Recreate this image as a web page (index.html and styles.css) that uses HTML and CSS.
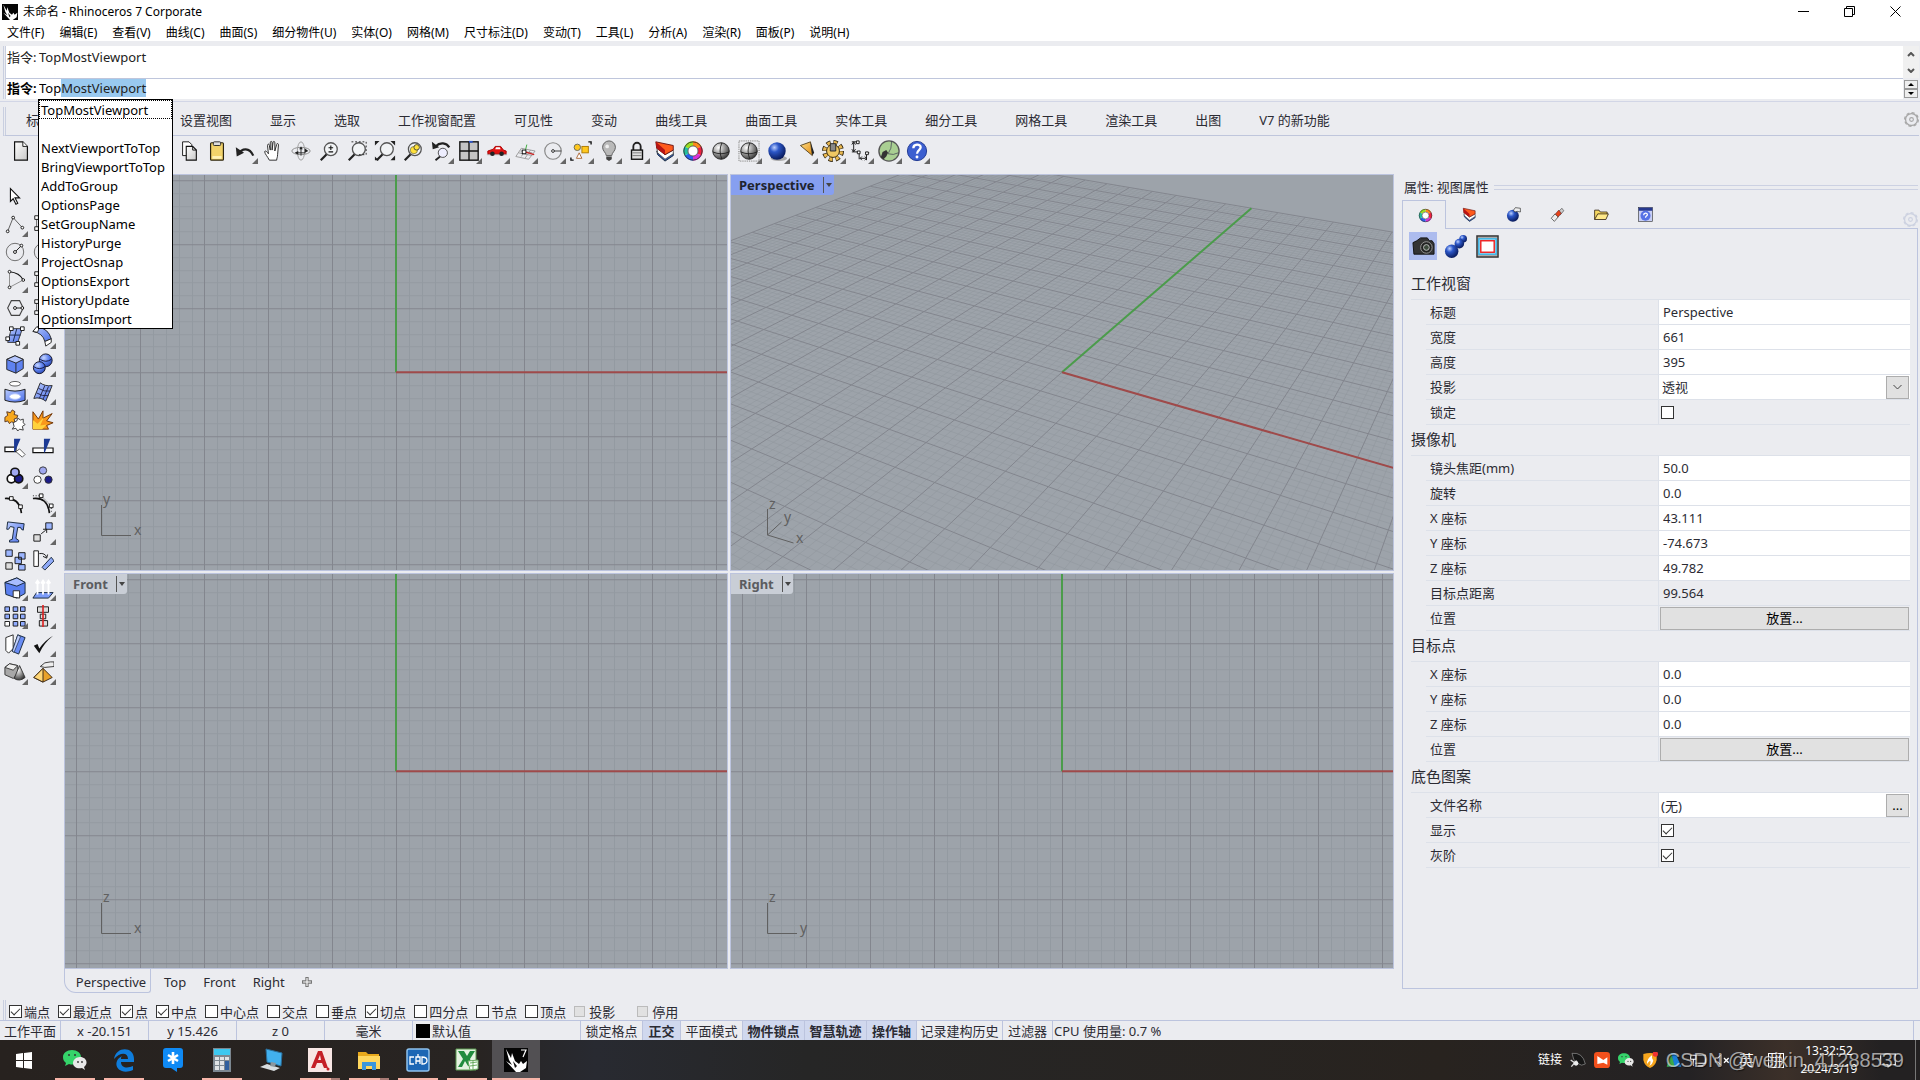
FILE: index.html
```html
<!DOCTYPE html>
<html lang="zh-CN">
<head>
<meta charset="utf-8">
<title>未命名 - Rhinoceros 7 Corporate</title>
<link rel="stylesheet" href="styles.css">
</head>
<body>
<svg class="defs" aria-hidden="true">
<defs>
<radialGradient id="gBlue" cx=".35" cy=".3" r=".75"><stop offset="0" stop-color="#bcd0ff"/><stop offset=".35" stop-color="#2c57c8"/><stop offset="1" stop-color="#061654"/></radialGradient>
<radialGradient id="gLight" cx=".35" cy=".3" r=".8"><stop offset="0" stop-color="#c4d4ff"/><stop offset=".5" stop-color="#5c80ee"/><stop offset="1" stop-color="#2440a8"/></radialGradient>
<radialGradient id="gGrey" cx=".35" cy=".3" r=".75"><stop offset="0" stop-color="#fff"/><stop offset=".5" stop-color="#9a9a9a"/><stop offset="1" stop-color="#333"/></radialGradient>
<linearGradient id="gFill" x1="0" y1="0" x2="1" y2="1"><stop offset="0" stop-color="#b9cbff"/><stop offset="1" stop-color="#4c70e8"/></linearGradient>
<linearGradient id="gGold" x1="0" y1="0" x2="1" y2="1"><stop offset="0" stop-color="#ffe08a"/><stop offset="1" stop-color="#e08a10"/></linearGradient>
<linearGradient id="gPage" x1="0" y1="0" x2="1" y2="1"><stop offset="0" stop-color="#fff"/><stop offset="1" stop-color="#c8c8c8"/></linearGradient>

<symbol id="new" viewBox="0 0 24 24"><path d="M5 2h9l5 5v15H5z" fill="url(#gPage)" stroke="#111" stroke-width="1.3"/><path d="M14 2v5h5" fill="#fff" stroke="#111"/></symbol>
<symbol id="copy" viewBox="0 0 24 24"><path d="M5 2h7l3 3v12H5z" fill="#fff" stroke="#111"/><path d="M9 7h7l4 4v11H9z" fill="url(#gPage)" stroke="#111" stroke-width="1.2"/><path d="M16 7v4h4" fill="none" stroke="#111"/></symbol>
<symbol id="paste" viewBox="0 0 24 24"><rect x="5" y="3" width="14" height="19" rx="1" fill="#f2d36b" stroke="#2b2410" stroke-width="1.3"/><rect x="8" y="2" width="8" height="4" rx="1" fill="#ddd" stroke="#222"/><path d="M7 19h10" stroke="#fff3b8" stroke-width="3"/></symbol>
<symbol id="undo" viewBox="0 0 24 24"><path d="M4 16C9 8 17 8 21 17" fill="none" stroke="#222" stroke-width="2.4"/><path d="M2 8l1 10 8-4z" fill="#222"/></symbol>
<symbol id="hand" viewBox="0 0 24 24"><path d="M8 22C6 18 3 15 3 13s2-1 4 2L6 6c0-2 2-2 2 0l1 5V3c0-2 2-2 2 0v8l1-8c0-2 2-2 2 0v9l2-7c0-2 2-1 2 0l-1 11c0 3-1 4-1 6z" fill="#fff" stroke="#222"/></symbol>
<symbol id="orbit" viewBox="0 0 24 24"><ellipse cx="12" cy="12" rx="10" ry="4" fill="none" stroke="#888"/><ellipse cx="12" cy="12" rx="4" ry="10" fill="none" stroke="#999"/><path d="M7 14h10M12 8v9" stroke="#222"/><path d="M12 7l-2 3h4zM5 14l4-2v4zM20 12l-4-3v5z" fill="#222"/></symbol>
<symbol id="zoom" viewBox="0 0 24 24"><path d="M10 15l-7 7" stroke="#222" stroke-width="2.4"/><circle cx="14" cy="10" r="7" fill="#f2f4f6" stroke="#555" stroke-width="1.4"/></symbol>
<symbol id="zoompm" viewBox="0 0 24 24"><use href="#zoom"/><path d="M14 6v5m-2.500-2.500h5M11.500 13h5" stroke="#111" stroke-width="1.2"/></symbol>
<symbol id="zoomwin" viewBox="0 0 24 24"><use href="#zoom"/><path d="M6 2h16v14H12" fill="none" stroke="#222" stroke-dasharray="2 2"/></symbol>
<symbol id="zoomext" viewBox="0 0 24 24"><use href="#zoom"/><path d="M1 1h5L1 6zM23 1h-5l5 5zM23 22v-5l-5 5zM1 22v-4l4 4z" fill="#222"/></symbol>
<symbol id="zoomsel" viewBox="0 0 24 24"><use href="#zoom"/><circle cx="13" cy="11" r="4" fill="#ffe13a" stroke="#443" stroke-width=".6"/><circle cx="16" cy="8" r="3" fill="#ffe13a" stroke="#443"/></symbol>
<symbol id="zoomundo" viewBox="0 0 24 24"><path d="M11 18l-5 4" stroke="#222" stroke-width="2"/><circle cx="14" cy="14" r="5" fill="#eef" stroke="#444"/><path d="M6 7c5-5 12-4 15 1" fill="none" stroke="#222" stroke-width="2.4"/><path d="M2 2l1 8 7-2z" fill="#222"/></symbol>
<symbol id="fourview" viewBox="0 0 24 24"><rect x="2" y="2" width="20" height="20" fill="#c4c4c4" stroke="#111" stroke-width="1.5"/><path d="M2 12h20M12 2v20" stroke="#111" stroke-width="1.5"/><path d="M12 2h4" stroke="#2d55c8" stroke-width="2"/></symbol>
<symbol id="car" viewBox="0 0 24 24"><path d="M1 16h22" stroke="#aaa"/><path d="M2 15v-3l6-2 2-3h6l3 4 3 1v3z" fill="#e21212" stroke="#a00"/><path d="M10 10l1-2h4l1 2z" fill="#fff"/><circle cx="7" cy="15" r="2.500" fill="#222"/><circle cx="17" cy="15" r="2.500" fill="#222"/></symbol>
<symbol id="cplane" viewBox="0 0 24 24"><path d="M2 18l6-9 15 3-7 9zM5 14l15 3M7 12l13 2M8 18l5-8M12 20l6-9" fill="none" stroke="#999"/><path d="M12 13l10 3" stroke="#c22" stroke-width="1.5"/><path d="M12 13l2-8" stroke="#3a3"/><rect x="9" y="11" width="4" height="4" fill="#fff" stroke="#111"/></symbol>
<symbol id="radius" viewBox="0 0 24 24"><circle cx="12" cy="12" r="9" fill="none" stroke="#888" stroke-width="1.3"/><path d="M12 12h9" stroke="#333"/><circle cx="12" cy="12" r="1.500" fill="#fff" stroke="#222"/></symbol>
<symbol id="objs" viewBox="0 0 24 24"><circle cx="8" cy="8" r="3.500" fill="#ffc81e" stroke="#665"/><rect x="13" y="7" width="7" height="7" fill="#ffc81e" stroke="#a70"/><path d="M10 14l3 6H7z" fill="#fff" stroke="#a63"/><path d="M20 2h3v3M1 19v3h3" fill="none" stroke="#111" stroke-width="1.500"/></symbol>
<symbol id="bulb" viewBox="0 0 24 24"><path d="M9 17c0-3-4-5-4-9a7 7 0 0 1 14 0c0 4-4 6-4 9z" fill="#b9b9b9" stroke="#555"/><path d="M9 18h6v3l-3 2-3-2z" fill="#444"/><circle cx="10" cy="7" r="2" fill="#eee"/></symbol>
<symbol id="lock" viewBox="0 0 24 24"><path d="M8 11V7a4 4 0 0 1 8 0v4" fill="none" stroke="#222" stroke-width="2"/><rect x="6" y="11" width="12" height="10" fill="#ddd" stroke="#111" stroke-width="1.500"/><path d="M7 14h10M7 17h10" stroke="#777"/></symbol>
<symbol id="layers" viewBox="0 0 24 24"><path d="M3 12l9 8 9-6v3l-9 6-8-7z" fill="#2c57b8" stroke="#123"/><path d="M3 8l9 8 9-5v4l-9 6-8-7z" fill="#fff" stroke="#555"/><path d="M2 2l19 4v5l-9 5-9-7z" fill="#ff5a1c" stroke="#611"/><path d="M2 2l10 9v5l-9-7z" fill="#b81414"/></symbol>
<symbol id="wheel" viewBox="0 0 24 24"><g fill="none" stroke-width="5"><path d="M12 4a8 8 0 0 1 7 4" stroke="#ff8a1a"/><path d="M19 8a8 8 0 0 1 0 8" stroke="#f32040"/><path d="M19 16a8 8 0 0 1-7 4" stroke="#d832d8"/><path d="M12 20a8 8 0 0 1-7-4" stroke="#2860f0"/><path d="M5 16a8 8 0 0 1 0-8" stroke="#22c0a0"/><path d="M5 8a8 8 0 0 1 7-4" stroke="#9be020"/></g><circle cx="12" cy="12" r="10" fill="none" stroke="#333"/><circle cx="12" cy="12" r="5.500" fill="#fff" stroke="#555"/></symbol>
<symbol id="gsphere" viewBox="0 0 24 24"><circle cx="12" cy="12" r="9" fill="url(#gGrey)" stroke="#222"/><path d="M3 13q9 4 18 0M13 3q-4 9 0 18" fill="none" stroke="#222"/></symbol>
<symbol id="dsphere" viewBox="0 0 24 24"><rect x="1" y="1" width="22" height="22" fill="none" stroke="#aaa" stroke-width="2" stroke-dasharray="1 1"/><use href="#gsphere"/></symbol>
<symbol id="bsphere" viewBox="0 0 24 24"><ellipse cx="14" cy="20" rx="9" ry="3" fill="#aaa"/><circle cx="12" cy="12" r="9.500" fill="url(#gBlue)"/></symbol>
<symbol id="cone" viewBox="0 0 24 24"><path d="M7 6l11-4 2 15z" fill="url(#gGold)" stroke="#542"/><path d="M18 2l2 15 2-3z" fill="#222"/></symbol>
<symbol id="gear" viewBox="0 0 24 24"><circle cx="12" cy="12" r="9" fill="none" stroke="#2d2410" stroke-width="6" stroke-dasharray="4.200 2.900"/><circle cx="12" cy="12" r="9" fill="none" stroke="#e9b850" stroke-width="4" stroke-dasharray="3.200 3.900" stroke-dashoffset="-.5"/><circle cx="12" cy="12" r="7" fill="#f0c864" stroke="#2d2410"/><path d="M9 4h6v8H9z" fill="#888" stroke="#222"/></symbol>
<symbol id="dims" viewBox="0 0 24 24"><g fill="none" stroke="#111"><path d="M2 2h6M4 3v9M2 13h8v8M18 14v8M11 20h6M18 14h3"/><path d="M2 5l2-3 2 3M2 10l2 3 2-3M13 18l-2 2 2 2M16 18l2 2-2 2"/><path d="M7 1h3v3H7zM8 12h3v3H8zM17 13h3v3h-3z" fill="#fff"/></g></symbol>
<symbol id="green" viewBox="0 0 24 24"><circle cx="12" cy="12" r="11" fill="#a9cf92" stroke="#555" stroke-width="1.500"/><path d="M3 19l2-6 4-2 2 3-2 4-3 3z" fill="#333"/><path d="M11 15q4-5 4-14M11 15q6 2 11-1" fill="none" stroke="#445" stroke-width=".8"/></symbol>
<symbol id="help" viewBox="0 0 24 24"><circle cx="12" cy="12" r="10.500" fill="#3c5fd0" stroke="#1b348e"/><path d="M8 9c0-5 8-5 8-1 0 3-4 3-4 7" fill="none" stroke="#fff" stroke-width="2.500"/><circle cx="12" cy="18.500" r="1.600" fill="#fff"/></symbol>

<symbol id="arrow" viewBox="0 0 24 24"><path d="M7 4v14l3-3 3 6 2-1-3-6h5z" fill="#fff" stroke="#111" stroke-width="1.200"/></symbol>
<symbol id="poly" viewBox="0 0 24 24"><path d="M4 20L10 5l10 11" fill="none" stroke="#555"/><g fill="#fff" stroke="#111"><circle cx="4" cy="20" r="1.500"/><circle cx="10" cy="5" r="1.500"/><circle cx="20" cy="16" r="1.500"/></g></symbol>
<symbol id="circ" viewBox="0 0 24 24"><circle cx="12" cy="12" r="9.500" fill="none" stroke="#666"/><path d="M12 12l7-7" stroke="#111"/><circle cx="12" cy="12" r="1.600" fill="#fff" stroke="#111"/><circle cx="19" cy="5" r="1.500" fill="#fff" stroke="#111"/></symbol>
<symbol id="arc" viewBox="0 0 24 24"><path d="M6 3v17l15-8" fill="none" stroke="#888"/><path d="M6 3q11 1 15 9" fill="none" stroke="#111" stroke-width="1.300"/><g fill="#fff" stroke="#111"><circle cx="6" cy="3" r="1.500"/><circle cx="6" cy="20" r="1.500"/><circle cx="21" cy="12" r="1.500"/></g></symbol>
<symbol id="hexa" viewBox="0 0 24 24"><path d="M8 4h9l4 8-4 8H8l-4-8z" fill="none" stroke="#444" stroke-width="1.200"/><path d="M12 12h8" stroke="#111"/><circle cx="12" cy="12" r="1.600" fill="#fff" stroke="#111"/><circle cx="20" cy="12" r="1.500" fill="#fff" stroke="#111"/></symbol>
<symbol id="pts" viewBox="0 0 24 24"><path d="M5 5v12" stroke="#666"/><path d="M3 3h4v4H3zM3 15h4v4H3z" fill="#fff" stroke="#111"/></symbol>
<symbol id="surf" viewBox="0 0 24 24"><path d="M8 4h12l-5 15H4z" fill="url(#gFill)" stroke="#333"/><path d="M6 11h12M14 4l-4 14" stroke="#124"/><g fill="#fff" stroke="#111"><path d="M6 2h4v4H6zM18 2h4v4h-4zM2 13h4v4H2zM13 18h4v4h-4z"/></g></symbol>
<symbol id="sweep" viewBox="0 0 24 24"><path d="M1 7l5-5q12 2 15 13l-7 3Q12 9 1 7z" fill="url(#gFill)" stroke="#222"/><path d="M14 18l7-3v4l-6 4zM1 7l4-5 3 1-2 5z" fill="#fff" stroke="#222"/></symbol>
<symbol id="box" viewBox="0 0 24 24"><path d="M3 7l9-4 9 4v10l-8 5-10-4z" fill="#5f82f0" stroke="#222"/><path d="M3 7l10 4 8-4-9-4z" fill="#b6c7ff" stroke="#222"/><path d="M13 11v11" stroke="#222"/></symbol>
<symbol id="balls" viewBox="0 0 24 24"><circle cx="15" cy="8" r="7" fill="url(#gLight)" stroke="#112"/><circle cx="8" cy="16" r="6.500" fill="url(#gLight)" stroke="#112"/><path d="M2 15q6 4 12 0M9 7q6 4 12 0" fill="none" stroke="#113"/></symbol>
<symbol id="trimhole" viewBox="0 0 24 24"><ellipse cx="12" cy="3" rx="6" ry="2.500" fill="#fff" stroke="#555"/><path d="M1 9q11 4 22 0v12q-11 4-22 0z" fill="url(#gFill)" stroke="#111"/><ellipse cx="12" cy="17" rx="6" ry="3" fill="#fff" stroke="#b8c8ff"/></symbol>
<symbol id="mesh" viewBox="0 0 24 24"><path d="M9 2q5 4 13 3l-7 17q-6-5-13-3z" fill="url(#gFill)" stroke="#222"/><path d="M14 5L8 19M18 6l-6 14M7 8q6 4 13 3M5 13q6 4 13 3" fill="none" stroke="#224"/></symbol>
<symbol id="puzzle" viewBox="0 0 24 24"><path d="M1 9l3-2-1-4 4 1 2-3 3 2-1 3 4 1-1 3-3 1 1 4-4-1-2 2-2-3-3 1z" fill="#f7a81c" stroke="#532"/><path d="M10 15l4-2 1-3 3 2 3-1v4l2 2-3 2 1 4-4-1-2 2-2-3-4 1 2-3z" fill="#fff" stroke="#333"/></symbol>
<symbol id="boom" viewBox="0 0 24 24"><path d="M1 3l6 8 5-9v8l10-5-6 8 7 2-7 3 2 4H1z" fill="#f9981b" stroke="#6a2e00"/><path d="M1 12l5 4 7-7-4 9 7-1-5 5H1z" fill="#ffd23c"/></symbol>
<symbol id="trim" viewBox="0 0 24 24"><path d="M1 11h12v5H1z" fill="#fff" stroke="#111" stroke-width="1.300"/><path d="M11 2h7l-6 14h-1z" fill="#1c3a94"/><path d="M13 16l4-3 6 6-3 3z" fill="#fff" stroke="#555"/></symbol>
<symbol id="split" viewBox="0 0 24 24"><path d="M1 12h22v5H1z" fill="#fff" stroke="#111" stroke-width="1.300"/><path d="M13 2h7l-6 15h-1z" fill="#1c3a94"/></symbol>
<symbol id="group" viewBox="0 0 24 24"><g stroke="#111" stroke-width="1.800"><circle cx="8" cy="15" r="4.500" fill="#fff"/><circle cx="16" cy="15" r="4.500" fill="#1c1c88"/><circle cx="12" cy="8" r="4.500" fill="#a0a8f0"/></g></symbol>
<symbol id="ungroup" viewBox="0 0 24 24"><g stroke="#333"><circle cx="12" cy="6" r="4" fill="#a0a8f0"/><circle cx="6" cy="16" r="4" fill="#fff"/><circle cx="18" cy="16" r="4" fill="#1c1c88"/></g></symbol>
<symbol id="curve" viewBox="0 0 24 24"><path d="M1 6q16-1 18 16" fill="none" stroke="#111" stroke-width="1.800"/><path d="M6 4h4v4H6zM16 13h4v4h-4z" fill="#fff" stroke="#111"/></symbol>
<symbol id="curve2" viewBox="0 0 24 24"><path d="M1 6q16-2 18 16" fill="none" stroke="#111" stroke-width="1.800"/><path d="M1 3h9l11 11v8" fill="none" stroke="#111" stroke-dasharray="1 2"/><path d="M8 1h4v4H8zM19 12h4v4h-4z" fill="#fff" stroke="#111"/></symbol>
<symbol id="ttool" viewBox="0 0 24 24"><path d="M4 1l18 2-1 7-2-1-1-2-3 0-2 12 3 2v2H6v-2l3-1 2-13-4-1-2 3-2 0z" fill="url(#gFill)" stroke="#123"/></symbol>
<symbol id="move" viewBox="0 0 24 24"><path d="M15 2h7v7h-7z" fill="#9cb6ff" stroke="#111"/><path d="M2 15h7v7H2z" fill="#ddd" stroke="#111"/><path d="M10 14l5-4M12 9h4v4" fill="none" stroke="#111"/></symbol>
<symbol id="arrayc" viewBox="0 0 24 24"><g stroke="#111" fill="#9cb6ff"><path d="M2 1h7v7H2zM16 4h7v7h-7zM12 9h7v7h-7zM16 17h7v6h-7z"/><path d="M2 15h7v7H2z" fill="#ddd"/></g></symbol>
<symbol id="rotate" viewBox="0 0 24 24"><path d="M2 2h5v17H2z" fill="#fff" stroke="#111"/><path d="M11 20L21 9l3 4-10 10z" fill="#8faaf8" stroke="#123"/><path d="M8 5q6-1 8 4M12 8l4 2 1-4" fill="none" stroke="#111"/></symbol>
<symbol id="solid" viewBox="0 0 24 24"><path d="M1 6l13-5 9 5v12l-9 5-12-4z" fill="#5b80f0" stroke="#123"/><path d="M1 6l13 4 9-4-9-5z" fill="#a8bdff" stroke="#123"/><path d="M10 15h7v8l-7-1z" fill="#fff" stroke="#222"/></symbol>
<symbol id="proj" viewBox="0 0 24 24"><path d="M5 17h18l-5 6H1z" fill="#7c9cf8" stroke="#123"/><path d="M6 19V4M12 19V4M18 19V4M4 7l2-3 2 3M10 7l2-3 2 3M16 7l2-3 2 3" fill="none" stroke="#fff" stroke-width="2"/></symbol>
<symbol id="grid9" viewBox="0 0 24 24"><g fill="#8fabff" stroke="#111"><path d="M1 2h5v5H1zM10 2h5v5h-5zM18 2h5v5h-5zM1 10h5v5H1zM10 10h5v5h-5zM18 10h5v5h-5zM10 18h5v5h-5zM18 18h5v5h-5z"/><path d="M1 18h5v5H1z" fill="#fff"/></g></symbol>
<symbol id="align" viewBox="0 0 24 24"><g fill="#ddd" stroke="#111"><path d="M6 2h12v6H6zM9 10h6v5H9zM8 17h9v6H8z"/></g><path d="M12 0v24" stroke="#d22" stroke-width="1.800"/></symbol>
<symbol id="sheets" viewBox="0 0 24 24"><path d="M2 5l8-3v15l-5 5-3-3z" fill="#fff" stroke="#222"/><path d="M15 2l8 3-7 18-7-3z" fill="#6a8df4" stroke="#123"/><path d="M15 2l3 2-7 17-2-1z" fill="#c2d0ff" stroke="#123" stroke-width=".7"/></symbol>
<symbol id="check" viewBox="0 0 24 24"><path d="M2 14l4-2 2 5Q14 8 23 3 13 11 8 22z" fill="#111"/></symbol>
<symbol id="prims" viewBox="0 0 24 24"><path d="M1 7l5-4 9 2v9l-5 5-9-4z" fill="#a8a8a8" stroke="#333"/><path d="M1 7l9 3 5-5-9-2z" fill="#eee" stroke="#333"/><path d="M17 5l6 13q-6 5-12 1z" fill="url(#gGrey)" stroke="#333"/></symbol>
<symbol id="pyra" viewBox="0 0 24 24"><path d="M12 8l10 10-10 5-10-5z" fill="#e9a22b" stroke="#321"/><path d="M12 8v15L2 18z" fill="#ffd777" stroke="#321"/><path d="M9 6l5-4 6-1h4v5l-10 1z" fill="#eee" stroke="#333"/></symbol>

<symbol id="bhand" viewBox="0 0 24 24"><circle cx="11" cy="14" r="9.500" fill="url(#gBlue)"/><path d="M12 5l3-4 8 1v6l-5-1-4 1z" fill="#eee" stroke="#222"/></symbol>
<symbol id="tube" viewBox="0 0 24 24"><path d="M13 8l6-6 3 4-6 7z" fill="#ccc" stroke="#444"/><path d="M8 12l6-7 4 5-6 7z" fill="#e8431a" stroke="#622"/><path d="M2 18l6-7 5 5-6 7z" fill="#eee" stroke="#222"/></symbol>
<symbol id="folder" viewBox="0 0 24 24"><path d="M1 20V5h7l2 3h11v4" fill="#f6d860" stroke="#321" stroke-width="1.300"/><path d="M1 20l5-9h17l-4 9z" fill="#ffe98a" stroke="#321" stroke-width="1.300"/></symbol>
<symbol id="helpwin" viewBox="0 0 24 24"><rect x="1" y="1" width="22" height="22" fill="#c8cff5" stroke="#333"/><path d="M1 1h22v5H1z" fill="#26388e"/><circle cx="12" cy="14" r="8" fill="#5572e6"/><path d="M9 13c0-4 6-4 6-1s-3 2-3 5" fill="none" stroke="#fff" stroke-width="2"/></symbol>
<symbol id="camera" viewBox="0 0 24 24"><path d="M1 8l4-2 4-3h7l2 3h3l2 3v11H2z" fill="#333" stroke="#111"/><circle cx="15" cy="13" r="6" fill="#222" stroke="#999"/><circle cx="15" cy="13" r="3" fill="#3c4a3c" stroke="#bbb"/></symbol>
<symbol id="trio" viewBox="0 0 24 24"><circle cx="20" cy="4" r="4" fill="url(#gBlue)"/><circle cx="16" cy="9" r="5" fill="url(#gBlue)"/><circle cx="8" cy="17" r="7" fill="url(#gBlue)"/></symbol>
<symbol id="frame" viewBox="0 0 24 24"><rect x="1" y="1" width="22" height="22" fill="#aaa" stroke="#333" stroke-width="1.500"/><rect x="3" y="4" width="18" height="16" fill="#d8e6ee" stroke="#36b6ea" stroke-width="1.500"/><rect x="5" y="6" width="14" height="12" fill="#fff" stroke="#e22" stroke-width="1.500"/></symbol>
<symbol id="cog" viewBox="0 0 24 24"><circle cx="12" cy="12" r="9.500" fill="none" stroke="currentColor" stroke-width="2"/><circle cx="12" cy="12" r="11" fill="none" stroke="currentColor" stroke-width="2" stroke-dasharray="5 3.600"/><circle cx="12" cy="12" r="3" fill="none" stroke="currentColor" stroke-width="1.800"/></symbol>

<symbol id="rhino" viewBox="0 0 24 24"><path d="M0 0h24v24H0z" fill="#050505"/><path d="M2 1l5 9 1-5 3 8 4 3 2-3 2 3 4-3-1 7-6 4h-4L2 13l6 4-3-5z" fill="#fff"/><path d="M9 13l4 5-2 2z" fill="#111"/></symbol>
<symbol id="rhino7" viewBox="0 0 24 24"><use href="#rhino"/><path d="M17 2h5l-3 7" fill="none" stroke="#fff" stroke-width="1.200"/></symbol>
<symbol id="win" viewBox="0 0 24 24"><path d="M4 6l7-1v7H4zM12 5l8-1v8h-8zM4 13h7v7l-7-1zM12 13h8v8l-8-1z" fill="#fff"/></symbol>
<symbol id="wechat" viewBox="0 0 24 24"><path d="M9 2c-5 0-9 3-9 7 0 3 1 4 3 6l-1 3 4-2c6 2 12-2 12-7 0-4-4-7-9-7z" fill="#35d46a"/><path d="M17 9c-4 0-7 3-7 6 0 4 4 6 9 5l3 2-1-3c5-4 2-10-4-10z" fill="#e8e8e8"/><g fill="#333"><circle cx="6" cy="7" r="1"/><circle cx="12" cy="7" r="1"/><circle cx="15" cy="14" r=".9"/><circle cx="19" cy="14" r=".9"/></g></symbol>
<symbol id="edge" viewBox="0 0 24 24"><path d="M2 11C4-2 22-2 22 11v3H9c0 7 8 6 12 4v4C10 27 2 20 5 13c1-3 4-4 5-5-1 1-1 2-1 3h7C16 4 8 4 2 11z" fill="#0f7ddc"/></symbol>
<symbol id="star" viewBox="0 0 24 24"><path d="M5 0h14q3 0 3 3v14q0 3-3 3h-3l0 4-6-4H5q-3 0-3-3V3q0-3 3-3z" fill="#0f8af5"/><path d="M12 4v12M7 7l10 6M17 7L7 13" stroke="#fff" stroke-width="2.600"/></symbol>
<symbol id="calc" viewBox="0 0 24 24"><path d="M3 0h18v24H3z" fill="#7c8790"/><path d="M4 1h16v6H4z" fill="#3cc8f0"/><path d="M5 9h4v3H5zM10 9h4v3h-4zM15 9h4v3h-4zM5 13h4v4H5zM10 13h4v4h-4zM5 18h4v4H5zM10 18h4v4h-4z" fill="#dfe3e6"/><path d="M15 13h4v9h-4z" fill="#2f5f9e"/></symbol>
<symbol id="pc" viewBox="0 0 24 24"><path d="M7 1l16 4-1 13-14-4z" fill="#42b0ee" stroke="#2a6f9c"/><path d="M1 19l7-3 13 4-6 3z" fill="#d8dde0"/><path d="M12 14l5 1-1 4-5-1z" fill="#8b979e"/></symbol>
<symbol id="acad" viewBox="0 0 24 24"><path d="M0 0h24v24H0z" fill="#f8e6e4"/><path d="M3 20L10 3h4l6 17h-4l-2-5H9l-2 5zM10 12h3l-1-5z" fill="#c41f26"/><circle cx="20" cy="21" r="1.500" fill="#c41f26"/></symbol>
<symbol id="explorer" viewBox="0 0 24 24"><path d="M1 4h8l2 2h11v14H1z" fill="#e8a91c"/><path d="M1 8h22v13H1z" fill="#ffd75e"/><path d="M5 22v-8h14v8h-4v-4H9v4z" fill="#3a96dc"/></symbol>
<symbol id="cadk" viewBox="0 0 24 24"><rect x="1" y="1" width="22" height="22" rx="2" fill="#1c66b4" stroke="#8ec2ee" stroke-width="1.500"/><path d="M8 9H4v7h4M10 16V9h4v7M10 13h4M12 9V6M16 9q5 0 5 3.500T16 16z" fill="none" stroke="#fff" stroke-width="1.300"/></symbol>
<symbol id="excel" viewBox="0 0 24 24"><path d="M1 1h20v21H1z" fill="#e4f2e0" stroke="#5a9a50"/><path d="M3 3h6l3 5 3-5h5l-5 8 3 7h-5l-3-5-3 6H3l5-8z" fill="#218c3e"/><path d="M13 13l10-1v9l-8 1z" fill="#f8fff8" stroke="#6aab60"/><path d="M15 15l7-1M15 18l7-1M18 13v8" stroke="#6aab60"/></symbol>
<symbol id="dish" viewBox="0 0 24 24"><path d="M3 2q16-2 20 16-5 4-12-1T3 2z" fill="#161616" stroke="#999"/><path d="M2 22l8-9M1 12l10 7" stroke="#ddd" stroke-width="2"/><circle cx="9" cy="17" r="3.500" fill="#eee"/></symbol>
<symbol id="toapp" viewBox="0 0 24 24"><rect x="0" y="0" width="24" height="24" rx="5" fill="#f2501c"/><path d="M5 6l9 6 6-4v11l-6-3-9 2z" fill="#fff"/></symbol>
<symbol id="shield" viewBox="0 0 24 24"><path d="M2 3q10-3 20 0v9q-2 9-10 12Q4 21 2 12z" fill="#f6a51d"/><path d="M8 18q-2-7 7-13-1 5 2 8-1 5-6 8 3-6 1-8-3 2-4 5z" fill="#fff"/><circle cx="20" cy="3" r="4" fill="#e33"/></symbol>
<symbol id="tri" viewBox="0 0 24 24"><path d="M8 2l6 20H1z" fill="#3aa84a"/><path d="M8 2h6l9 20H13z" fill="#1a7fd8"/></symbol>
<symbol id="net" viewBox="0 0 24 24"><path d="M6 5h17v12H8M1 5h8v6H1zM5 11v10M12 21h8" fill="none" stroke="#fff" stroke-width="1.600"/></symbol>
<symbol id="mute" viewBox="0 0 24 24"><path d="M2 9h4l5-5v16l-5-5H2z" fill="none" stroke="#ddd" stroke-width="1.600"/><path d="M15 9l7 7M22 9l-7 7" stroke="#fff" stroke-width="2"/></symbol>
<symbol id="note" viewBox="0 0 24 24"><path d="M1 3h22v16h-7l-4 4v-4H1z" fill="none" stroke="#fff" stroke-width="1.600"/></symbol>

<pattern id="gridTop" width="64" height="64" patternUnits="userSpaceOnUse"><path class="minor" d="M13.500 0v64M26.500 0v64M39.500 0v64M52.500 0v64M0 13.500h64M0 26.500h64M0 38.500h64M0 51.500h64"/><path class="major" d="M.5 0v64M0 .5h64"/></pattern>
</defs>
</svg>

<div class="app">
<header class="titlebar">
  <svg class="appicon"><use href="#rhino"/></svg><h1>未命名 - Rhinoceros 7 Corporate</h1>
  <div class="winbtns">
    <button><svg viewBox="0 0 11 11"><path d="M0 5.500h11"/></svg></button>
    <button><svg viewBox="0 0 11 11"><path d="M.5 2.500h8v8h-8zM2.500 2.500v-2h8v8h-2"/></svg></button>
    <button><svg viewBox="0 0 11 11"><path d="M.5.5l10 10M10.500.5l-10 10"/></svg></button>
  </div>
</header>
<nav class="menu">
  <button>文件(F)</button><button>编辑(E)</button><button>查看(V)</button><button>曲线(C)</button><button>曲面(S)</button><button>细分物件(U)</button><button>实体(O)</button><button>网格(M)</button><button>尺寸标注(D)</button><button>变动(T)</button><button>工具(L)</button><button>分析(A)</button><button>渲染(R)</button><button>面板(P)</button><button>说明(H)</button>
</nav>

<section class="command">
  <div class="cmdmain">
    <div class="history"><span>指令:</span>TopMostViewport</div>
    <div class="prompt"><label for="cmd">指令:</label><input id="cmd" value="TopMostViewport" autocomplete="off" spellcheck="false">
      <ul class="suggest"><li class="current">TopMostViewport</li><li></li><li>NextViewportToTop</li><li>BringViewportToTop</li><li>AddToGroup</li><li>OptionsPage</li><li>SetGroupName</li><li>HistoryPurge</li><li>ProjectOsnap</li><li>OptionsExport</li><li>HistoryUpdate</li><li>OptionsImport</li></ul>
    </div>
  </div>
  <div class="cmdscroll">
    <div class="scrollarrows"><svg viewBox="0 0 8 5"><path d="M1 4l3-3 3 3"/></svg><svg viewBox="0 0 8 5"><path d="M1 1l3 3 3-3"/></svg></div>
    <div class="spin"><button><svg viewBox="0 0 6 3"><path d="M0 3l3-3 3 3z"/></svg></button><button><svg viewBox="0 0 6 3"><path d="M0 0l3 3 3-3z"/></svg></button></div>
  </div>
</section>

<section class="toolbar">
  <div class="tabs">
    <button class="on">标准</button><button>工作平面</button><button>设置视图</button><button>显示</button><button>选取</button><button>工作视窗配置</button><button>可见性</button><button>变动</button><button>曲线工具</button><button>曲面工具</button><button>实体工具</button><button>细分工具</button><button>网格工具</button><button>渲染工具</button><button>出图</button><button>V7 的新功能</button>
    <button class="cog"><svg><use href="#cog"/></svg></button>
  </div>
  <div class="tools">
    <button><svg><use href="#new"/></svg></button><button><svg><use href="#folder"/></svg></button><button><svg><use href="#paste"/></svg></button><button><svg><use href="#copy"/></svg></button><button><svg><use href="#new"/></svg></button><button></button>
    <button><svg><use href="#copy"/></svg></button><button><svg><use href="#paste"/></svg></button><button class="more"><svg><use href="#undo"/></svg></button><button><svg><use href="#hand"/></svg></button><button><svg><use href="#orbit"/></svg></button><button><svg><use href="#zoompm"/></svg></button><button><svg><use href="#zoomwin"/></svg></button><button><svg><use href="#zoomext"/></svg></button><button><svg><use href="#zoomsel"/></svg></button><button class="more"><svg><use href="#zoomundo"/></svg></button><button class="more"><svg><use href="#fourview"/></svg></button><button class="more"><svg><use href="#car"/></svg></button><button class="more"><svg><use href="#cplane"/></svg></button><button class="more"><svg><use href="#radius"/></svg></button><button class="more"><svg><use href="#objs"/></svg></button><button class="more"><svg><use href="#bulb"/></svg></button><button class="more"><svg><use href="#lock"/></svg></button><button class="more"><svg><use href="#layers"/></svg></button><button class="more"><svg><use href="#wheel"/></svg></button><button><svg><use href="#gsphere"/></svg></button><button class="more"><svg><use href="#dsphere"/></svg></button><button class="more"><svg><use href="#bsphere"/></svg></button><button class="more"><svg><use href="#cone"/></svg></button><button class="more"><svg><use href="#gear"/></svg></button><button class="more"><svg><use href="#dims"/></svg></button><button class="more"><svg><use href="#green"/></svg></button><button class="more"><svg><use href="#help"/></svg></button>
  </div>
</section>

<main class="work">
  <aside class="side">
    <button><svg><use href="#arrow"/></svg></button><button></button>
    <button class="more"><svg><use href="#poly"/></svg></button><button class="more"><svg><use href="#pts"/></svg></button>
    <button class="more"><svg><use href="#circ"/></svg></button><button class="more"><svg><use href="#circ"/></svg></button>
    <button class="more"><svg><use href="#arc"/></svg></button><button class="more"><svg><use href="#pts"/></svg></button>
    <button class="more"><svg><use href="#hexa"/></svg></button><button class="more"><svg><use href="#pts"/></svg></button>
    <button class="more"><svg><use href="#surf"/></svg></button><button class="more"><svg><use href="#sweep"/></svg></button>
    <button class="more"><svg><use href="#box"/></svg></button><button class="more"><svg><use href="#balls"/></svg></button>
    <button class="more"><svg><use href="#trimhole"/></svg></button><button class="more"><svg><use href="#mesh"/></svg></button>
    <button><svg><use href="#puzzle"/></svg></button><button><svg><use href="#boom"/></svg></button>
    <button><svg><use href="#trim"/></svg></button><button><svg><use href="#split"/></svg></button>
    <button class="more"><svg><use href="#group"/></svg></button><button><svg><use href="#ungroup"/></svg></button>
    <button><svg><use href="#curve"/></svg></button><button class="more"><svg><use href="#curve2"/></svg></button>
    <button><svg><use href="#ttool"/></svg></button><button class="more"><svg><use href="#move"/></svg></button>
    <button><svg><use href="#arrayc"/></svg></button><button><svg><use href="#rotate"/></svg></button>
    <button class="more"><svg><use href="#solid"/></svg></button><button class="more"><svg><use href="#proj"/></svg></button>
    <button class="more"><svg><use href="#grid9"/></svg></button><button class="more"><svg><use href="#align"/></svg></button>
    <button class="more"><svg><use href="#sheets"/></svg></button><button class="more"><svg><use href="#check"/></svg></button>
    <button class="more"><svg><use href="#prims"/></svg></button><button class="more"><svg><use href="#pyra"/></svg></button>
  </aside>

  <div class="center">
    <div class="views">
      <section class="view">
        <svg class="canvas"><svg x="50%" y="50%" overflow="visible"><rect x="-2048" y="-2048" width="4096" height="4096" fill="url(#gridTop)"/><path class="green" d="M0 0V-2048"/><path class="red" d="M0 0H2048"/></svg></svg>
        <svg class="axes" viewBox="0 0 60 60"><path d="M10.500 14v30.500H40"/><text x="12" y="13">y</text><text x="43" y="44">x</text></svg>
      </section>
      <section class="view">
        <svg class="canvas"><svg x="50%" y="50%" overflow="visible"><path class="minor3d" id="minor3d"/><path class="major3d" id="major3d"/><path class="green" id="axisY"/><path class="red" id="axisX"/></svg></svg>
        <svg class="axes" viewBox="0 0 60 60"><path d="M10.500 18v26l26 8M10.500 44l14-13"/><text x="12" y="18">z</text><text x="27" y="31">y</text><text x="39" y="52">x</text></svg>
        <button class="vtitle active"><span>Perspective</span><i></i></button>
      </section>
      <section class="view">
        <svg class="canvas"><svg x="50%" y="50%" overflow="visible"><rect x="-2048" y="-2048" width="4096" height="4096" fill="url(#gridTop)"/><path class="green" d="M0 0V-2048"/><path class="red" d="M0 0H2048"/></svg></svg>
        <svg class="axes" viewBox="0 0 60 60"><path d="M10.500 14v30.500H40"/><text x="12" y="13">z</text><text x="43" y="44">x</text></svg>
        <button class="vtitle"><span>Front</span><i></i></button>
      </section>
      <section class="view">
        <svg class="canvas"><svg x="50%" y="50%" overflow="visible"><rect x="-2048" y="-2048" width="4096" height="4096" fill="url(#gridTop)"/><path class="green" d="M0 0V-2048"/><path class="red" d="M0 0H2048"/></svg></svg>
        <svg class="axes" viewBox="0 0 60 60"><path d="M10.500 14v30.500H40"/><text x="12" y="13">z</text><text x="43" y="44">y</text></svg>
        <button class="vtitle"><span>Right</span><i></i></button>
      </section>
    </div>
    <div class="vtabs"><button class="on">Perspective</button><button>Top</button><button>Front</button><button>Right</button><button class="plus"><svg viewBox="0 0 9 9"><path d="M3.500.5h2v3h3v2h-3v3h-2v-3h-3v-2h3z"/></svg></button></div>
  </div>

  <aside class="panel">
    <h2><span>属性: 视图属性</span></h2>
    <div class="ptabs">
      <button class="on"><svg><use href="#wheel"/></svg></button><button><svg><use href="#layers"/></svg></button><button><svg><use href="#bhand"/></svg></button><button><svg><use href="#tube"/></svg></button><button><svg><use href="#folder"/></svg></button><button><svg><use href="#helpwin"/></svg></button>
      <button class="cog"><svg><use href="#cog"/></svg></button>
    </div>
    <div class="pbody">
      <div class="modes"><button class="on"><svg><use href="#camera"/></svg></button><button><svg><use href="#trio"/></svg></button><button><svg><use href="#frame"/></svg></button></div>
      <h3>工作视窗</h3>
      <table>
        <tr><th></th><th><label for="p1">标题</label></th><td><input id="p1" value="Perspective"></td></tr>
        <tr><th></th><th><label for="p2">宽度</label></th><td><input id="p2" value="661"></td></tr>
        <tr><th></th><th><label for="p3">高度</label></th><td><input id="p3" value="395"></td></tr>
        <tr><th></th><th><label for="p4">投影</label></th><td><div class="pick"><select id="p4"><option>透视</option></select><svg class="chev" viewBox="0 0 9 6"><path d="M.5.5l4 4 4-4"/></svg></div></td></tr>
        <tr><th></th><th><label for="p5">锁定</label></th><td class="flat"><input id="p5" type="checkbox"></td></tr>
      </table>
      <h3>摄像机</h3>
      <table>
        <tr><th></th><th><label for="c1">镜头焦距(mm)</label></th><td><input id="c1" value="50.0"></td></tr>
        <tr><th></th><th><label for="c2">旋转</label></th><td><input id="c2" value="0.0"></td></tr>
        <tr><th></th><th><label for="c3">X 座标</label></th><td><input id="c3" value="43.111"></td></tr>
        <tr><th></th><th><label for="c4">Y 座标</label></th><td><input id="c4" value="-74.673"></td></tr>
        <tr><th></th><th><label for="c5">Z 座标</label></th><td><input id="c5" value="49.782"></td></tr>
        <tr><th></th><th><label for="c6">目标点距离</label></th><td class="flat"><input id="c6" value="99.564" readonly></td></tr>
        <tr><th></th><th>位置</th><td class="flat"><button>放置...</button></td></tr>
      </table>
      <h3>目标点</h3>
      <table>
        <tr><th></th><th><label for="t1">X 座标</label></th><td><input id="t1" value="0.0"></td></tr>
        <tr><th></th><th><label for="t2">Y 座标</label></th><td><input id="t2" value="0.0"></td></tr>
        <tr><th></th><th><label for="t3">Z 座标</label></th><td><input id="t3" value="0.0"></td></tr>
        <tr><th></th><th>位置</th><td class="flat"><button>放置...</button></td></tr>
      </table>
      <h3>底色图案</h3>
      <table>
        <tr><th></th><th><label for="w1">文件名称</label></th><td><div class="pick"><input id="w1" value="(无)"><button>...</button></div></td></tr>
        <tr><th></th><th><label for="w2">显示</label></th><td class="flat"><input id="w2" type="checkbox" checked></td></tr>
        <tr><th></th><th><label for="w3">灰阶</label></th><td class="flat"><input id="w3" type="checkbox" checked></td></tr>
      </table>
    </div>
  </aside>
</main>

<section class="osnap">
  <label><input type="checkbox" checked>端点</label><label><input type="checkbox" checked>最近点</label><label><input type="checkbox" checked>点</label><label><input type="checkbox" checked>中点</label><label><input type="checkbox">中心点</label><label><input type="checkbox">交点</label><label><input type="checkbox">垂点</label><label><input type="checkbox" checked>切点</label><label><input type="checkbox">四分点</label><label><input type="checkbox">节点</label><label><input type="checkbox">顶点</label><label class="wide"><input type="checkbox" disabled>投影</label><label class="wide"><input type="checkbox" disabled>停用</label>
</section>

<footer class="status">
  <button class="w60">工作平面</button><span class="w88">x -20.151</span><span class="w88">y 15.426</span><span class="w88">z 0</span><span class="w88">毫米</span><span class="w168 layer"><i></i>默认值</span>
  <button class="w62">锁定格点</button><button class="w38 on">正交</button><button class="w62">平面模式</button><button class="w62 on">物件锁点</button><button class="w62 on">智慧轨迹</button><button class="w50 on">操作轴</button><button class="w86">记录建构历史</button><button class="w50">过滤器</button><span class="cpu">CPU 使用量: 0.7 %</span><span class="grip"></span>
</footer>

<footer class="taskbar">
  <div class="apps">
    <button class="start"><svg><use href="#win"/></svg></button><button class="run"><svg><use href="#wechat"/></svg></button><button class="run"><svg><use href="#edge"/></svg></button><button><svg><use href="#star"/></svg></button><button class="run"><svg><use href="#calc"/></svg></button><button><svg><use href="#pc"/></svg></button><button class="run multi"><svg><use href="#acad"/></svg></button><button class="run multi"><svg><use href="#explorer"/></svg></button><button class="run"><svg><use href="#cadk"/></svg></button><button class="run"><svg><use href="#excel"/></svg></button><button class="run now"><svg><use href="#rhino7"/></svg></button>
  </div>
  <div class="tray">
    <span class="links">链接</span><svg><use href="#dish"/></svg><svg><use href="#toapp"/></svg><svg><use href="#wechat"/></svg><svg><use href="#shield"/></svg><svg><use href="#tri"/></svg><svg><use href="#net"/></svg><svg><use href="#mute"/></svg><span class="ime">英</span><span class="ime pin">拼</span>
    <div class="clock">13:32:52<br>2024/3/19</div><svg class="note"><use href="#note"/></svg><i class="edge"></i>
  </div>
  <div class="mark">CSDN @weixin_41288539</div>
</footer>
</div>
<script src="app.js"></script>
</body>
</html>
```
FILE: styles.css
```css
* { box-sizing: border-box; }
body { margin: 0; font: 13px/18px "Noto Sans", "Noto Sans CJK SC", sans-serif; color: #2b2b33; background: #ebecf0; }
button, input, select { font: inherit; color: inherit; margin: 0; padding: 0; border: 0; background: none; border-radius: 0; outline: 0; }
button { display: flex; align-items: center; justify-content: center; white-space: nowrap; }
h1, h2, h3, ul { margin: 0; padding: 0; font-weight: 400; list-style: none; }
svg { display: block; flex: none; }
.defs { position: absolute; width: 0; height: 0; }
.app { display: flex; flex-direction: column; height: 100vh; overflow: hidden; }

.titlebar { display: flex; align-items: center; height: 23px; background: #fff; color: #000; padding-left: 2px; }
.titlebar h1 { font-size: 12px; flex: 1; padding-left: 5px; }
.appicon { width: 16px; height: 16px; }
.winbtns { display: flex; margin-right: 2px; }
.winbtns button { width: 46px; height: 20px; }
.winbtns svg { width: 11px; height: 11px; fill: none; stroke: #000; }
.menu { display: flex; height: 18px; background: #fff; color: #000; font-size: 12px; }
.menu button { padding: 0 8px 0 7px; height: 20px; }

.command { display: flex; height: 61px; padding: 5px 1px 2px 3px; border-bottom: 1px solid #d2d6e6; }
.cmdmain { flex: 1; border-left: 3px double #c9cfe0; height: 53px; color: #222; }
.history { height: 33px; padding: 2px 0 0 1px; background: #fff; border-bottom: 1px solid #bfc6dc; }
.history span, .prompt label { display: inline-block; width: 32px; }
.prompt { position: relative; display: flex; align-items: center; height: 20px; background: #fff; padding: 0 0 2px 1px; color: #000; }
.prompt label { font-weight: 600; }
.prompt input { flex: 1; height: 18px; caret-color: transparent; }
.prompt input::selection { background: #99c9ef; color: #222; }
.suggest { position: absolute; z-index: 5; left: 32px; top: 20px; width: 135px; background: #fff; border: 1px solid #000; font-size: 13px; }
.suggest li { height: 19px; line-height: 20px; padding-left: 2px; }
.suggest .current { border: 1px dotted #000; padding-left: 1px; line-height: 18px; }
.cmdscroll { width: 16px; }
.scrollarrows { height: 32px; background: #f0f0f0; display: flex; flex-direction: column; align-items: center; justify-content: space-around; }
.scrollarrows svg { width: 8px; height: 5px; fill: none; stroke: #555; stroke-width: 2; }
.spin { display: flex; flex-direction: column; padding: 2px 1px; }
.spin button { height: 9px; border: 1px solid #999; background: #eee; }
.spin svg { width: 6px; height: 3px; }

.toolbar { height: 72px; padding: 5px 1px 0 3px; }
.tabs { display: flex; gap: 38px; height: 29px; padding-left: 20px; border-bottom: 1px solid #bfc6dc; border-left: 3px double #c9cfe0; }
.tabs button { height: 25px; }
.cog { color: #a6a6a6; }
.cog svg { width: 15px; height: 15px; }
.tabs .cog { margin-left: auto; }
.tools { display: flex; padding: 1px 0 0 4px; }
.tools button, .side button { position: relative; width: 28px; height: 28px; flex: none; }
.tools svg { width: 22px; height: 22px; }
.more::after { content: ""; position: absolute; right: 1px; bottom: 1px; border: 3px solid transparent; border-right-color: #666; border-bottom-color: #666; }

.work { display: flex; flex: 1; min-height: 0; }
.side { display: grid; grid-template-columns: 28px 28px; align-content: start; width: 64px; padding: 8px 0 0 1px; }
.side svg { width: 22px; height: 22px; }
.center { flex: 1; min-width: 0; display: flex; flex-direction: column; }
.views { flex: 1; min-height: 0; display: grid; grid-template: 1fr 1fr / 1fr 1fr; gap: 2px; }
.view { position: relative; overflow: hidden; border: 1px solid #bcc4de; background: #9da3aa; }
.canvas { width: 100%; height: 100%; fill: none; }
.minor { stroke: #939aa1; }
.major { stroke: #83868e; }
.minor3d { stroke: #8d949b; stroke-width: 1; opacity: .45; }
.major3d { stroke: #83868e; }
.green { stroke: #4b9c4b; stroke-width: 2; }
.red { stroke: #9f4a4a; stroke-width: 2; }
.axes { position: absolute; left: 26px; bottom: 19px; width: 60px; height: 60px; fill: none; stroke: #606060; }
.axes text { font-size: 14px; fill: #606060; stroke: none; }
.vtitle { position: absolute; left: 0; top: 0; height: 20px; background: #c9ced6; color: #5b5c60; font-weight: 700; border-bottom-right-radius: 3px; }
.vtitle span { padding: 0 8px; }
.vtitle i { display: flex; align-items: center; justify-content: center; width: 11px; height: 16px; border-left: 1px solid #555; }
.vtitle i::after { content: ""; border: 3px solid transparent; border-top: 4px solid #444; border-bottom: 0; }
.vtitle.active { background: #869ff0; color: #20242e; }
.vtabs { display: flex; height: 31px; padding-bottom: 7px; }
.vtabs button { height: 24px; padding: 2px 0 0 13px; }
.vtabs button:nth-child(n+3) { padding-left: 17px; }
.vtabs .on { width: 87px; padding-left: 7px; border: 1px solid #bcc4de; border-top: 0; border-radius: 0 0 3px 12px; }
.plus svg { width: 10px; height: 10px; fill: #fff; stroke: #777; }

.panel { width: 526px; padding: 4px 2px 11px 8px; display: flex; flex-direction: column; }
.panel h2 { display: flex; align-items: center; font-size: 13px; height: 18px; padding-left: 2px; gap: 5px; margin-bottom: 4px; }
.panel h2::after { content: ""; flex: 1; height: 3px; border: solid #ccd1e2; border-width: 1px 0; }
.ptabs { display: flex; height: 29px; }
.ptabs button { width: 44px; height: 29px; padding-left: 2px; border-bottom: 1px solid #bcc4de; }
.ptabs .on { border: 1px solid #bcc4de; border-bottom: 0; }
.ptabs svg { width: 15px; height: 15px; }
.ptabs .cog { flex: 1; justify-content: flex-end; padding-top: 10px; color: #ccd1e0; }
.pbody { flex: 1; border: 1px solid #bcc4de; border-top: 0; padding: 3px 7px 0 8px; }
.modes { display: flex; gap: 4px; margin: 0 0 8px -2px; }
.modes button { width: 28px; height: 28px; }
.modes .on { background: #adbcee; }
.modes svg { width: 23px; height: 23px; }
.pbody h3 { font-size: 15px; line-height: 31px; height: 31px; }
.pbody table { width: 100%; border-collapse: separate; border-spacing: 0; table-layout: fixed; border-top: 1px solid #dde1e9; margin-bottom: -1px; }
.pbody tr { height: 25px; }
.pbody th, .pbody td { padding: 0; height: 25px; text-align: left; font-weight: 400; border-bottom: 1px solid #dde1e9; }
.pbody th:first-child { width: 15px; border: 0; }
.pbody th:nth-child(2) { width: 233px; padding-left: 4px; border-right: 1px solid #dde1e9; }
.pbody td { background: #fff; }
.pbody td.flat { background: none; }
.pbody td input { display: block; width: 100%; height: 24px; padding-left: 4px; }
.pbody td button { width: 249px; height: 23px; margin-left: 1px; background: #e1e1e1; border: 1px solid #adadad; color: #000; }
.pick { position: relative; display: flex; align-items: center; height: 24px; padding-right: 1px; }
.pick select { appearance: none; flex: 1; height: 24px; padding-left: 3px; }
.pick .chev { width: 23px; height: 23px; padding: 7px 6px; background: #e1e1e1; border: 1px solid #adadad; fill: none; stroke: #444; }
.pick input#w1 { padding-left: 2px; }
.pbody .pick button { width: 23px; flex: none; margin: 0; }

input[type=checkbox], .pbody td input[type=checkbox] { appearance: none; width: 13px; height: 13px; margin: 0 2px; padding: 0; border: 1px solid #333; background: #fff; display: grid; place-items: center; }
input[type=checkbox]:checked::after { content: ""; width: 8px; height: 4px; border: solid #333; border-width: 0 0 1px 1px; rotate: -45deg; translate: 0 -1px; }
.osnap { display: flex; align-items: center; height: 20px; padding: 3px 0 0 1px; margin-left: 3px; border-left: 3px double #c9cfe0; }
.osnap label { display: flex; align-items: center; margin-right: 6px; }
.osnap .wide { margin-right: 20px; }
.osnap input:disabled { width: 11px; height: 11px; margin-right: 4px; border-color: #bbb; background: #e1e1e1; }

.status { display: flex; height: 20px; border-top: 1px solid #bcc4de; }
.status > * { display: flex; align-items: center; justify-content: center; height: 19px; border-right: 1px solid #bcc4de; white-space: nowrap; flex: none; padding-top: 1px; }
.status .on { background: #d0d8ee; font-weight: 700; }
.w60 { width: 61px; } .w88 { width: 88px; } .w168 { width: 168px; } .w62 { width: 62px; } .w38 { width: 38px; } .w50 { width: 50px; } .w86 { width: 86px; }
.status .layer { justify-content: flex-start; padding-left: 3px; }
.layer i { width: 14px; height: 14px; background: #000; margin-right: 2px; }
.status .cpu { flex: 1; justify-content: flex-start; padding-left: 1px; }
.status .grip { width: 6px; border: 0; }

.taskbar { position: relative; display: flex; justify-content: space-between; height: 40px; background: linear-gradient(90deg, #27221f, #282422 25%, #282a31 31%, #262626 42%, #28231f 75%, #242224 88%, #3c3029 93%, #232122 98%); color: #fff; }
.apps { display: flex; gap: 1px; }
.apps button { position: relative; width: 48px; height: 40px; }
.apps .start { margin-right: 2px; }
.apps svg { width: 24px; height: 24px; }
.run::after { content: ""; position: absolute; left: 4px; right: 4px; bottom: 0; height: 2px; background: #f7b5a9; }
.run.multi::after { background: linear-gradient(90deg, #f7b5a9 31px, #a87b75 31px); }
.run.now { background: #525053; }
.run.now::after { left: 0; right: 0; }
.tray { display: flex; align-items: center; gap: 8px; font-size: 12px; }
.tray svg { width: 16px; height: 16px; }
.ime { font-size: 15px; width: 16px; margin-left: 1px; }
.pin { border: 1px solid #fff; font-size: 13px; line-height: 13px; text-align: center; margin: 0 0 0 5px; }
.clock { width: 62px; margin: 0 12px 0 6px; font-size: 12px; line-height: 18px; text-align: center; }
.tray .edge { width: 1px; height: 40px; background: #777; margin: 0 4px 0 11px; }
.mark { position: absolute; right: 16px; top: 6px; font: 20px/28px "Liberation Sans", sans-serif; color: #ffffff99; text-shadow: 1px 1px 1px #0008; }
```
FILE: app.js
```js
// Perspective camera looking at the origin with a 50 mm lens.
var dist = 99.564, focal = 823, extent = 70;
function project(x, y) {
  var k = focal / (dist - 0.433 * x + 0.75 * y);
  return ((0.866 * x + 0.5 * y) * k).toFixed(1) + ' ' + ((0.25 * x - 0.433 * y) * k).toFixed(1);
}
function line(x1, y1, x2, y2) {
  return 'M' + project(x1, y1) + 'L' + project(x2, y2);
}
var minor = '', major = '';
for (var i = -extent; i <= extent; i++) {
  var pair = line(i, -extent, i, extent) + line(-extent, i, extent, i);
  if (i % 5) minor += pair; else major += pair;
}
document.getElementById('minor3d').setAttribute('d', minor);
document.getElementById('major3d').setAttribute('d', major);
document.getElementById('axisX').setAttribute('d', line(0, 0, extent, 0));
document.getElementById('axisY').setAttribute('d', line(0, 0, 0, extent));

var cmd = document.getElementById('cmd');
cmd.focus();
cmd.setSelectionRange(3, cmd.value.length);
```
